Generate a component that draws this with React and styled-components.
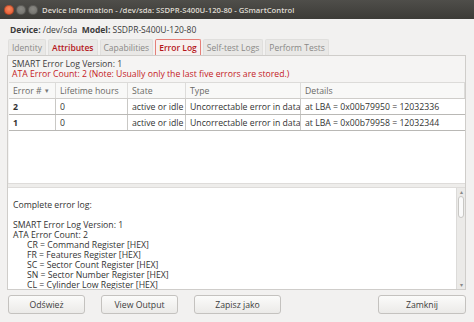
import React from 'react'
import styled, { createGlobalStyle } from 'styled-components'

const GlobalStyle = createGlobalStyle`
	html, body {
		margin: 0;
		padding: 0;
		background: #f2f1f0;
	}
	body {
		font-family: 'Open Sans', 'Noto Sans', sans-serif;
		color: #3c3c3c;
	}
`

const errors = [
	{ num: '2', hours: '0', state: 'active or idle', type: 'Uncorrectable error in data', details: 'at LBA = 0x00b79950 = 12032336' },
	{ num: '1', hours: '0', state: 'active or idle', type: 'Uncorrectable error in data', details: 'at LBA = 0x00b79958 = 12032344' },
]

const columns = [
	{ label: 'Error #', width: 47, sort: true },
	{ label: 'Lifetime hours', width: 72 },
	{ label: 'State', width: 58 },
	{ label: 'Type', width: 115 },
	{ label: 'Details', width: 0 },
]

const tabs = [
	{ label: 'Identity' },
	{ label: 'Attributes', warn: true },
	{ label: 'Capabilities' },
	{ label: 'Error Log', warn: true, active: true },
	{ label: 'Self-test Logs' },
	{ label: 'Perform Tests' },
]

const logLines = [
	{ text: 'Complete error log:' },
	{ text: '' },
	{ text: 'SMART Error Log Version: 1' },
	{ text: 'ATA Error Count: 2' },
	{ text: 'CR = Command Register [HEX]', indent: true },
	{ text: 'FR = Features Register [HEX]', indent: true },
	{ text: 'SC = Sector Count Register [HEX]', indent: true },
	{ text: 'SN = Sector Number Register [HEX]', indent: true },
	{ text: 'CL = Cylinder Low Register [HEX]', indent: true },
]

const App = () => {
	return (
		<Window>
			<GlobalStyle />
			<TitleBar>
				<WinButtons>
					<WinDot $close />
					<WinDot />
					<WinDot />
				</WinButtons>
				<Title>Device Information - /dev/sda: SSDPR-S400U-120-80 - GSmartControl</Title>
			</TitleBar>
			<Body>
				<DeviceLine>
					<b>Device:</b> /dev/sda&nbsp;&nbsp;<b>Model:</b> SSDPR-S400U-120-80
				</DeviceLine>
				<TabRow>
					{tabs.map((t) => (
						<Tab key={t.label} $warn={t.warn} $active={t.active}>
							{t.label}
						</Tab>
					))}
				</TabRow>
				<Panel>
					<InfoLine>SMART Error Log Version: 1</InfoLine>
					<InfoLine $red>ATA Error Count: 2 (Note: Usually only the last five errors are stored.)</InfoLine>
					<Table>
						<HeaderRow>
							{columns.map((c) => (
								<HeadCell key={c.label} $w={c.width}>
									{c.label}
									{c.sort && <SortArrow>▾</SortArrow>}
								</HeadCell>
							))}
						</HeaderRow>
						{errors.map((e) => (
							<Row key={e.num}>
								<Cell $w={47} $bold>{e.num}</Cell>
								<Cell $w={72}>{e.hours}</Cell>
								<Cell $w={58}>{e.state}</Cell>
								<Cell $w={115}>{e.type}</Cell>
								<Cell $w={0}>{e.details}</Cell>
							</Row>
						))}
						<TableFill />
					</Table>
					<Separator />
					<LogView>
						<LogText>
							{logLines.map((l, i) => (
								<LogLine key={i} $indent={l.indent}>
									{l.text || '\u00a0'}
								</LogLine>
							))}
						</LogText>
						<ScrollBar>
							<ScrollArrow>▴</ScrollArrow>
							<ScrollTrack>
								<ScrollThumb />
							</ScrollTrack>
							<ScrollArrow>▾</ScrollArrow>
						</ScrollBar>
					</LogView>
				</Panel>
				<ButtonRow>
					<Button>Odśwież</Button>
					<Button>View Output</Button>
					<Button $w={87}>Zapisz jako</Button>
					<Spacer />
					<Button $w={88}>Zamknij</Button>
				</ButtonRow>
			</Body>
		</Window>
	)
}

export default App

const Window = styled.div`
	width: 474px;
	height: 322px;
	display: flex;
	flex-direction: column;
	background: #f2f1f0;
	overflow: hidden;
	font-size: 8.7px;
`

const TitleBar = styled.div`
	height: 19px;
	flex-shrink: 0;
	display: flex;
	align-items: center;
	background: linear-gradient(#4f4e4a, #3c3b37);
	padding-left: 4px;
`

const WinButtons = styled.div`
	display: flex;
	gap: 2px;
	width: 38px;
`

const WinDot = styled.span`
	width: 10px;
	height: 10px;
	border-radius: 50%;
	background: ${(p) => (p.$close ? 'radial-gradient(circle at 50% 40%, #f58a5f, #e0461f)' : 'radial-gradient(circle at 50% 40%, #8a8984, #6a6964)')};
	box-shadow: inset 0 0 0 1px rgba(0, 0, 0, 0.25);
`

const Title = styled.div`
	color: #dfdbd2;
	font-weight: 600;
	font-size: 7.7px;
	white-space: nowrap;
`

const Body = styled.div`
	flex: 1;
	display: flex;
	flex-direction: column;
	padding: 0 8px 8px 7px;
	min-height: 0;
`

const DeviceLine = styled.div`
	height: 20px;
	display: flex;
	align-items: center;
	padding-left: 3px;
	font-size: 8.5px;
	white-space: pre;

	b {
		font-weight: 700;
	}
`

const TabRow = styled.div`
	display: flex;
	gap: 2px;
	height: 16px;
	padding-left: 1px;
`

const Tab = styled.div`
	padding: 0 3px;
	display: flex;
	align-items: center;
	font-size: 8.5px;
	color: ${(p) => (p.$warn ? '#b5161b' : '#8a8986')};
	font-weight: ${(p) => (p.$warn ? 600 : 400)};
	background: ${(p) => (p.$active ? '#f7f0ef' : '#e9e8e6')};
	border: 1px solid ${(p) => (p.$active ? '#e57f78' : '#e0dfdd')};
	border-bottom: none;
	border-radius: 2px 2px 0 0;
`

const Panel = styled.div`
	flex: 1;
	display: flex;
	flex-direction: column;
	border: 1px solid #cfcdca;
	background: #f5f4f3;
	min-height: 0;
`

const InfoLine = styled.div`
	height: 10px;
	line-height: 10px;
	padding-left: 4px;
	color: ${(p) => (p.$red ? '#c41a1f' : '#3c3c3c')};
	white-space: nowrap;
	&:first-child {
		margin-top: 3px;
	}
`

const Table = styled.div`
	margin-top: 3px;
	margin-left: 1px;
	border-top: 1px solid #dcdbd9;
	background: #fefefe;
	display: flex;
	flex-direction: column;
	height: 100px;
	flex-shrink: 0;
`

const HeaderRow = styled.div`
	display: flex;
	height: 15px;
	border-bottom: 1px solid #cfcdca;
	background: #f8f8f7;
`

const HeadCell = styled.div`
	${(p) => (p.$w ? `width: ${p.$w}px;` : 'flex: 1;')}
	flex-shrink: 0;
	padding-left: 4px;
	box-sizing: border-box;
	display: flex;
	align-items: center;
	color: #6a6966;
	border-right: 1px solid #dddcda;
`

const SortArrow = styled.span`
	margin-left: 3px;
	font-size: 7px;
	color: #777;
`

const Row = styled.div`
	display: flex;
	height: 15px;
	border-bottom: 1px solid #b9b8b5;
	background: #fff;
`

const Cell = styled.div`
	${(p) => (p.$w ? `width: ${p.$w}px;` : 'flex: 1;')}
	flex-shrink: 0;
	padding-left: 4px;
	box-sizing: border-box;
	display: flex;
	align-items: center;
	overflow: hidden;
	font-weight: ${(p) => (p.$bold ? 700 : 400)};
	color: #333;
	white-space: nowrap;
	border-right: 1px solid #c9c8c5;
	&:last-child {
		border-right: none;
	}
`

const TableFill = styled.div`
	flex: 1;
	background: #fff;
`

const Separator = styled.div`
	height: 3px;
	flex-shrink: 0;
	background: #eeedeb;
	border-top: 1px solid #dedcda;
	border-bottom: 1px solid #dedcda;
`

const LogView = styled.div`
	flex: 1;
	display: flex;
	background: #fff;
	min-height: 0;
	overflow: hidden;
`

const LogText = styled.div`
	flex: 1;
	padding: 12px 0 0 5px;
`

const LogLine = styled.div`
	height: 10px;
	line-height: 10px;
	white-space: pre;
	color: #333;
	padding-left: ${(p) => (p.$indent ? '14px' : '0')};
`

const ScrollBar = styled.div`
	width: 8px;
	display: flex;
	flex-direction: column;
	background: #ebeae8;
	border-left: 1px solid #dcdbd9;
`

const ScrollArrow = styled.div`
	height: 8px;
	font-size: 6px;
	line-height: 8px;
	text-align: center;
	color: #888;
`

const ScrollTrack = styled.div`
	flex: 1;
	padding: 0 1px;
`

const ScrollThumb = styled.div`
	height: 20px;
	border-radius: 3px;
	background: #fafafa;
	border: 1px solid #c8c7c4;
`

const ButtonRow = styled.div`
	display: flex;
	gap: 16px;
	margin-top: 5px;
	height: 19px;
	padding-left: 1px;
`

const Button = styled.button`
	width: ${(p) => (p.$w ? p.$w : 77)}px;
	height: 19px;
	font-family: 'Open Sans', 'Noto Sans', sans-serif;
	font-size: 8.7px;
	color: #3c3c3c;
	border: 1px solid #c4c2bf;
	border-radius: 3px;
	background: linear-gradient(#fbfbfa, #ebeae8);
	padding: 0;
`

const Spacer = styled.div`
	flex: 1;
`
